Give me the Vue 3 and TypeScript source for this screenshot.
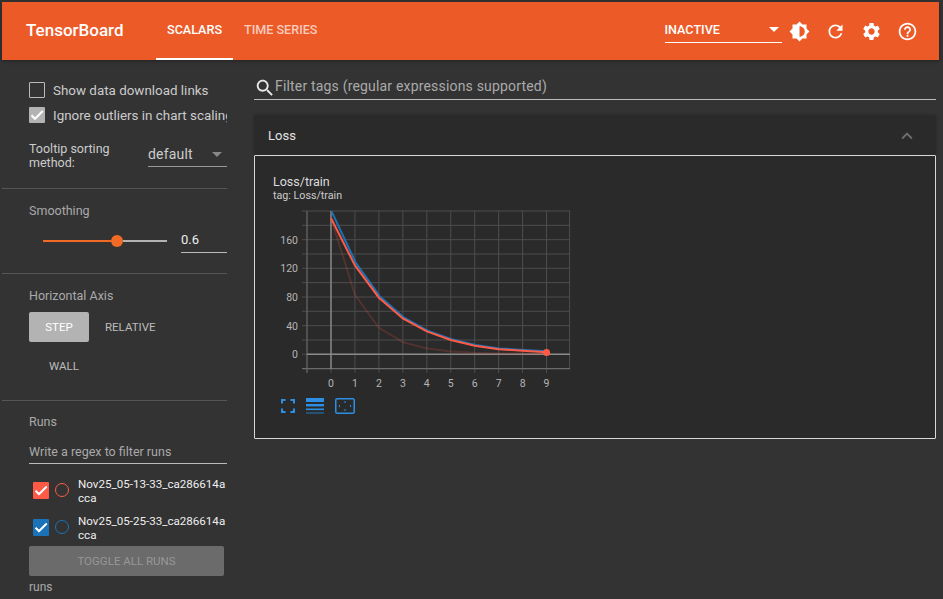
<script setup lang="ts">
const runs = [
  { name: 'Nov25_05-13-33_ca286614acca', color: '#ff5a46' },
  { name: 'Nov25_05-25-33_ca286614acca', color: '#1a73b8' }
]

// chart scale, read off the gridlines
const xOf = (step: number) => 58 + step * 23.95
const yOf = (v: number) => 154.3 - v * 0.7165
const toPoints = (vals: number[]) => vals.map((v, i) => `${xOf(i)},${yOf(v)}`).join(' ')

const xGrid = [0, 1, 2, 3, 4, 5, 6, 7, 8, 9]
const yGrid = [-20, 0, 20, 40, 60, 80, 100, 120, 140, 160, 180, 200]
const yLabels = [0, 40, 80, 120, 160]

const blue = toPoints([198, 127, 80, 50.5, 32, 20, 12, 7, 5, 3])
const red = toPoints([190, 124, 79, 50, 32, 20, 12, 7, 5, 3])
const rawRed = toPoints([190, 83, 37, 17, 8, 4, 2, 1, 1, 0.5])
</script>

<template>
  <div class="page">
    <header class="toolbar">
      <div class="logo">TensorBoard</div>
      <nav class="tabs">
        <div class="tab tab--active">Scalars</div>
        <div class="tab">Time Series</div>
      </nav>
      <div class="spacer"></div>
      <div class="reload-select">
        <span>INACTIVE</span>
        <i class="caret caret--white"></i>
      </div>
      <div class="icon-btn">
        <svg viewBox="0 0 24 24"><path d="M20 15.31L23.31 12 20 8.69V4h-4.69L12 .69 8.69 4H4v4.69L.69 12 4 15.31V20h4.69L12 23.31 15.31 20H20v-4.69zM12 18V6c3.31 0 6 2.69 6 6s-2.69 6-6 6z" /></svg>
      </div>
      <div class="icon-btn">
        <svg viewBox="0 0 24 24"><path d="M17.65 6.35C16.2 4.9 14.21 4 12 4c-4.42 0-7.99 3.58-7.99 8s3.57 8 7.99 8c3.73 0 6.84-2.55 7.73-6h-2.08c-.82 2.33-3.04 4-5.65 4-3.31 0-6-2.69-6-6s2.69-6 6-6c1.66 0 3.14.69 4.22 1.78L13 11h7V4l-2.35 2.35z" /></svg>
      </div>
      <div class="icon-btn">
        <svg viewBox="0 0 24 24"><path d="M19.14 12.94c.04-.3.06-.61.06-.94 0-.32-.02-.64-.07-.94l2.03-1.58c.18-.14.23-.41.12-.61l-1.92-3.32c-.12-.22-.37-.29-.59-.22l-2.39.96c-.5-.38-1.03-.7-1.62-.94l-.36-2.54c-.04-.24-.24-.41-.48-.41h-3.84c-.24 0-.43.17-.47.41l-.36 2.54c-.59.24-1.13.57-1.62.94l-2.39-.96c-.22-.08-.47 0-.59.22L2.74 8.87c-.12.21-.08.47.12.61l2.03 1.58c-.05.3-.09.63-.09.94s.02.64.07.94l-2.03 1.58c-.18.14-.23.41-.12.61l1.92 3.32c.12.22.37.29.59.22l2.39-.96c.5.38 1.03.7 1.62.94l.36 2.54c.05.24.24.41.48.41h3.84c.24 0 .44-.17.47-.41l.36-2.54c.59-.24 1.13-.56 1.62-.94l2.39.96c.22.08.47 0 .59-.22l1.92-3.32c.12-.22.07-.47-.12-.61l-2.01-1.58zM12 15.6c-1.98 0-3.6-1.62-3.6-3.6s1.62-3.6 3.6-3.6 3.6 1.62 3.6 3.6-1.62 3.6-3.6 3.6z" /></svg>
      </div>
      <div class="icon-btn">
        <svg viewBox="0 0 24 24"><path d="M11 18h2v-2h-2v2zm1-16C6.48 2 2 6.48 2 12s4.48 10 10 10 10-4.48 10-10S17.52 2 12 2zm0 18c-4.41 0-8-3.59-8-8s3.59-8 8-8 8 3.59 8 8-3.59 8-8 8zm0-14c-2.21 0-4 1.79-4 4h2c0-1.1.9-2 2-2s2 .9 2 2c0 2-3 1.75-3 5h2c0-2.25 3-2.5 3-5 0-2.21-1.79-4-4-4z" /></svg>
      </div>
    </header>

    <div class="body">
      <aside class="sidebar">
        <section class="settings">
          <label class="check-row">
            <span class="box"></span>
            <span class="check-label">Show data download links</span>
          </label>
          <label class="check-row">
            <span class="box box--on">
              <svg viewBox="0 0 24 24"><path d="M9 16.17L4.83 12l-1.42 1.41L9 19 21 7l-1.41-1.41z" /></svg>
            </span>
            <span class="check-label">Ignore outliers in chart scaling</span>
          </label>
          <div class="tooltip-row">
            <div class="tooltip-label">Tooltip sorting method:</div>
            <div class="sort-select">
              <span>default</span>
              <i class="caret"></i>
            </div>
          </div>
        </section>

        <section class="smoothing">
          <div class="section-title">Smoothing</div>
          <div class="slider-row">
            <div class="slider">
              <div class="slider__fill"></div>
              <div class="slider__thumb"></div>
              <div class="slider__rest"></div>
            </div>
            <div class="slider-input">0.6</div>
          </div>
        </section>

        <section class="axis">
          <div class="section-title">Horizontal Axis</div>
          <div class="axis-btns">
            <div class="axis-btn axis-btn--active">STEP</div>
            <div class="axis-btn">RELATIVE</div>
            <div class="axis-btn axis-btn--wall">WALL</div>
          </div>
        </section>

        <section class="runs">
          <div class="section-title">Runs</div>
          <div class="runs-filter">Write a regex to filter runs</div>
          <div class="run-list">
            <div v-for="run in runs" :key="run.name" class="run">
              <span class="run__box" :style="{ background: run.color }">
                <svg viewBox="0 0 24 24"><path d="M9 16.17L4.83 12l-1.42 1.41L9 19 21 7l-1.41-1.41z" /></svg>
              </span>
              <span class="run__dot" :style="{ borderColor: run.color }"></span>
              <span class="run__name">{{ run.name }}</span>
            </div>
          </div>
          <div class="toggle-all">TOGGLE ALL RUNS</div>
          <div class="runs-foot">runs</div>
        </section>
      </aside>

      <main class="main">
        <div class="tag-filter">
          <svg viewBox="0 0 24 24"><path d="M15.5 14h-.79l-.28-.27C15.41 12.59 16 11.11 16 9.5 16 5.91 13.09 3 9.5 3S3 5.91 3 9.5 5.91 16 9.5 16c1.61 0 3.09-.59 4.23-1.57l.27.28v.79l5 4.99L20.49 19l-4.99-5zm-6 0C7.01 14 5 11.99 5 9.5S7.01 5 9.5 5 14 7.01 14 9.5 11.99 14 9.5 14z" /></svg>
          <span>Filter tags (regular expressions supported)</span>
        </div>

        <div class="group-head">
          <span>Loss</span>
          <svg viewBox="0 0 24 24"><path d="M12 8l-6 6 1.41 1.41L12 10.83l4.59 4.58L18 14z" /></svg>
        </div>

        <div class="card">
          <div class="card__title">Loss/train</div>
          <div class="card__tag">tag: Loss/train</div>
          <svg class="chart" width="320" height="192" viewBox="0 0 320 192">
            <g class="grid">
              <line v-for="s in xGrid" :key="s" :x1="xOf(s)" y1="11" :x2="xOf(s)" y2="173" />
              <line x1="296.6" y1="11" x2="296.6" y2="169" />
              <line v-for="v in yGrid" :key="v" x1="29" :y1="yOf(v)" x2="297" :y2="yOf(v)" />
            </g>
            <line class="axis-side" x1="34" y1="11" x2="34" y2="173" />
            <line class="axis-side" x1="29" y1="168.6" x2="297" y2="168.6" />
            <line class="axis-line" :x1="xOf(0)" y1="11" :x2="xOf(0)" y2="169" />
            <line class="axis-line" x1="34" :y1="yOf(0)" x2="297" :y2="yOf(0)" />
            <polyline class="raw" :points="rawRed" />
            <polyline class="curve curve--blue" :points="blue" />
            <polyline class="curve curve--red" :points="red" />
            <circle :cx="xOf(9)" :cy="yOf(2.5)" r="3.5" fill="#ff5a46" />
            <text v-for="v in yLabels" :key="v" class="tick" x="25" :y="yOf(v) + 4" text-anchor="end">{{ v }}</text>
            <text v-for="s in xGrid" :key="s" class="tick" :x="xOf(s)" y="187" text-anchor="middle">{{ s }}</text>
          </svg>
          <div class="chart-actions">
            <svg width="14" height="14" viewBox="0 0 14 14" class="act">
              <path d="M1 4.5V1h3.5M9.5 1H13v3.5M13 9.5V13H9.5M4.5 13H1V9.5" fill="none" stroke="#2b8fe6" stroke-width="2" />
            </svg>
            <svg width="18" height="16" viewBox="0 0 18 16" class="act">
              <rect y="0" width="18" height="4" fill="#2b8fe6" />
              <rect y="6" width="18" height="2.4" fill="#2b8fe6" />
              <rect y="10.5" width="18" height="1.6" fill="#2b8fe6" />
              <rect y="14.5" width="18" height="1" fill="#2178bf" />
            </svg>
            <svg width="20" height="16" viewBox="0 0 20 16" class="act">
              <rect x="0.75" y="0.75" width="18.5" height="14.5" rx="1.5" fill="none" stroke="#2b8fe6" stroke-width="1.5" />
              <path d="M10 3l-1.5 1.5h3zM10 13l-1.5-1.5h3zM3.5 8l1.5-1.5v3zM16.5 8l-1.5-1.5v3z" fill="#2b8fe6" />
            </svg>
          </div>
        </div>
      </main>
    </div>
  </div>
</template>

<style>
html,
body {
  margin: 0;
  background: #333;
}
</style>

<style scoped>
.page {
  height: 599px;
  overflow: hidden;
  padding-top: 2px;
  box-sizing: border-box;
  background: #333;
  font-family: Roboto, "Liberation Sans", sans-serif;
  color: #fff;
}

.toolbar {
  height: 58px;
  margin: 0 4px 0 2px;
  background: #ec5a27;
  display: flex;
  align-items: stretch;
  box-shadow: 0 1px 4px rgba(0, 0, 0, 0.35);
  position: relative;
}

.logo {
  margin-left: 24px;
  width: 130px;
  font-size: 17px;
  font-weight: 500;
  line-height: 56px;
}

.tabs {
  display: flex;
}

.tab {
  padding: 0 11px;
  font-size: 12.6px;
  font-weight: 500;
  line-height: 56px;
  text-transform: uppercase;
  color: rgba(255, 255, 255, 0.7);
  box-sizing: border-box;
}

.tab--active {
  width: 77px;
  color: #fff;
  border-bottom: 2px solid #fff;
}

.spacer {
  flex: 1;
}

.reload-select {
  width: 117px;
  height: 41px;
  box-sizing: border-box;
  border-bottom: 1px solid #fff;
  display: flex;
  align-items: center;
  justify-content: space-between;
  font-size: 12.6px;
  font-weight: 500;
  padding-right: 3px;
  padding-top: 15px;
}

.caret {
  width: 0;
  height: 0;
  border: 5px solid transparent;
  border-top-color: #aaa;
  border-bottom: 0;
}

.caret--white {
  border-top-color: #fff;
}

.icon-btn {
  width: 36px;
  display: flex;
  align-items: center;
  justify-content: center;
}

.icon-btn svg {
  width: 21px;
  height: 21px;
  fill: #fff;
}

.icon-btn:last-child {
  margin-right: 13.5px;
}

.body {
  display: flex;
}

.sidebar {
  width: 225px;
  margin-left: 2px;
  flex-shrink: 0;
  font-size: 13.4px;
  color: #ccc;
  overflow: hidden;
}

.sidebar section {
  border-bottom: 1px solid #555;
  padding-left: 27px;
}

.settings {
  height: 129px;
  box-sizing: border-box;
  padding-top: 22px;
}

.check-row {
  display: flex;
  align-items: center;
  height: 16px;
  margin-bottom: 9px;
  white-space: nowrap;
}

.box {
  width: 16px;
  height: 16px;
  box-sizing: border-box;
  border: 1px solid #bbb;
  border-radius: 1px;
  margin-right: 8px;
  flex-shrink: 0;
}

.box--on {
  background: #b3b3b3;
  border: 0;
}

.box svg {
  display: block;
  width: 16px;
  height: 16px;
  fill: #fff;
  stroke: #fff;
  stroke-width: 1.5;
}

.tooltip-row {
  display: flex;
  margin-top: 12px;
}

.tooltip-label {
  width: 119px;
  font-size: 12.5px;
  line-height: 14px;
  padding-top: 7px;
}

.sort-select {
  flex: 1;
  height: 32px;
  box-sizing: border-box;
  border-bottom: 1px solid #999;
  display: flex;
  align-items: center;
  justify-content: space-between;
  padding: 7px 5px 0 0;
  font-size: 14px;
  letter-spacing: 0.2px;
}

.sort-select .caret {
  border-top-color: #888;
}

.section-title {
  font-size: 12.5px;
  color: #aaa;
  line-height: 15px;
}

.smoothing {
  height: 85px;
  box-sizing: border-box;
  padding-top: 14px;
}

.slider-row {
  display: flex;
  margin-top: 9px;
}

.slider {
  margin-left: 14px;
  width: 124px;
  height: 28px;
  display: flex;
  align-items: center;
}

.slider__fill {
  width: 68px;
  height: 2px;
  background: #f26b26;
}

.slider__thumb {
  width: 12px;
  height: 12px;
  border-radius: 50%;
  background: #f26b26;
  flex-shrink: 0;
}

.slider__rest {
  flex: 1;
  height: 2px;
  background: #b3b3b3;
}

.slider-input {
  width: 46px;
  margin-left: 14px;
  height: 26px;
  box-sizing: border-box;
  border-bottom: 1px solid #bbb;
  font-size: 13px;
  color: #eee;
  line-height: 14px;
  padding-top: 6px;
}

.axis {
  height: 127px;
  box-sizing: border-box;
  padding-top: 14px;
}

.axis-btns {
  display: flex;
  flex-wrap: wrap;
  margin-top: 9px;
  font-size: 11.5px;
}

.axis-btn {
  height: 30px;
  line-height: 30px;
  padding: 0 16px;
  border-radius: 2px;
  color: #bbb;
}

.axis-btn--active {
  width: 60px;
  box-sizing: border-box;
  text-align: center;
  padding: 0;
  background: #b3b3b3;
  color: #fff;
}

.axis-btn--wall {
  margin-top: 9px;
  padding: 0 20px;
}

.runs {
  border-bottom: 0 !important;
  padding-top: 13px;
}

.runs-filter {
  width: 198px;
  height: 27px;
  margin-top: 8px;
  box-sizing: border-box;
  border-bottom: 1px solid #bbb;
  font-size: 12.5px;
  line-height: 30px;
  color: #aaa;
}

.run-list {
  margin-top: 11px;
}

.run {
  display: flex;
  height: 37px;
  align-items: flex-start;
  width: 198px;
}

.run__box {
  width: 16px;
  height: 17px;
  margin: 7px 0 0 4px;
  border-radius: 1px;
  flex-shrink: 0;
}

.run__box svg {
  display: block;
  width: 16px;
  height: 17px;
  fill: #fff;
  stroke: #fff;
  stroke-width: 1.5;
}

.run__dot {
  width: 12px;
  height: 12px;
  border: 1px solid;
  border-radius: 50%;
  margin: 8px 0 0 6px;
  flex-shrink: 0;
}

.run__name {
  width: 149px;
  margin: 2px 0 0 9px;
  font-size: 11.6px;
  line-height: 14px;
  color: #eee;
  word-break: break-all;
}

.toggle-all {
  width: 195px;
  height: 30px;
  line-height: 30px;
  background: #6b6b6b;
  border-radius: 2px;
  text-align: center;
  font-size: 11.5px;
  color: #979797;
  margin-top: -3px;
}

.runs-foot {
  font-size: 12px;
  color: #aaa;
  margin-top: 4px;
  line-height: 14px;
}

.main {
  width: 682px;
  margin-left: 27px;
}

.tag-filter {
  height: 40px;
  box-sizing: border-box;
  border-bottom: 1px solid #bbb;
  display: flex;
  align-items: flex-start;
  padding-top: 18px;
  font-size: 14px;
  color: #aaa;
  letter-spacing: 0.18px;
}

.tag-filter svg {
  width: 22px;
  height: 22px;
  fill: #e8e8e8;
  flex-shrink: 0;
  margin-top: -1px;
  margin-right: -1px;
}

.group-head {
  margin-top: 16px;
  height: 39px;
  box-sizing: border-box;
  background: #2a2a2a;
  box-shadow: 0 -1px 3px rgba(0, 0, 0, 0.25);
  display: flex;
  align-items: center;
  justify-content: space-between;
  padding: 0 18px 0 14px;
  font-size: 13px;
  color: #e4e4e4;
}

.group-head svg {
  width: 22px;
  height: 22px;
  fill: #6e6e6e;
}

.card {
  height: 284px;
  box-sizing: border-box;
  border: 1px solid #d8d8d8;
  border-radius: 1px;
  background: #2a2a2a;
  padding: 18px 0 0 18px;
}

.card__title {
  font-size: 12.5px;
  line-height: 16px;
  color: #ddd;
}

.card__tag {
  font-size: 10.7px;
  line-height: 12px;
  color: #ccc;
}

.chart {
  display: block;
  margin-top: -2px;
}

.grid line {
  stroke: #4d4d4d;
  stroke-width: 1;
}

.axis-side {
  stroke: #6a6a6a;
  stroke-width: 1.2;
}

.axis-line {
  stroke: #8a8a8a;
  stroke-width: 1.4;
}

.curve,
.raw {
  fill: none;
}

.curve {
  stroke-width: 2;
}

.curve--blue {
  stroke: #1a73b8;
  transform: translate(0.7px, -0.8px);
}

.curve--red {
  stroke: #ff5a46;
}

.raw {
  stroke: #ff5a46;
  stroke-opacity: 0.18;
  stroke-width: 2;
}

.tick {
  font-size: 10.5px;
  fill: #b5b5b5;
  font-family: Roboto, "Liberation Sans", sans-serif;
}

.chart-actions {
  display: flex;
  align-items: center;
  margin-top: 6px;
  margin-left: 8px;
  gap: 11px;
}

.act {
  display: block;
  flex-shrink: 0;
}
</style>
